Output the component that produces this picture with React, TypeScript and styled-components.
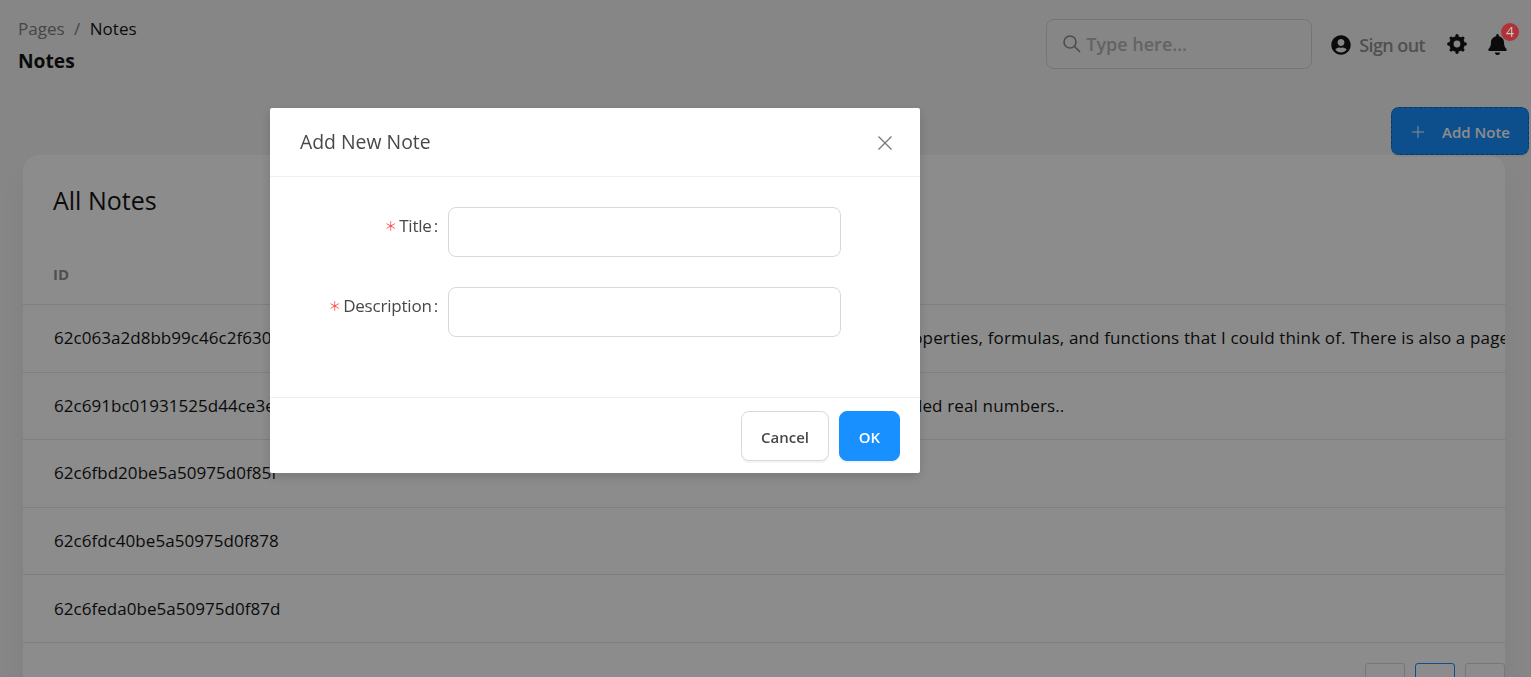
import React from "react";
import styled, { createGlobalStyle } from "styled-components";
import { FaUserCircle, FaBell } from "react-icons/fa";

const Global = createGlobalStyle`
    html, body {
        margin: 0;
        height: 100%;
        overflow: hidden;
        background: #f4f4f4;
        font-family: "Open Sans", "Liberation Sans", sans-serif;
    }
    * { box-sizing: border-box; }
`;

const Page = styled.div`
    height: 677px;
    overflow: hidden;
    padding: 0 2px 0 23px;
`;

const Header = styled.header`
    height: 107px;
    display: flex;
    justify-content: space-between;
    margin-left: -5px;
`;

const Crumbs = styled.div`
    padding-top: 17px;
`;

const CrumbLine = styled.div`
    display: flex;
    gap: 9.5px;
    font-size: 17px;
    line-height: 23px;
    color: #141414;
`;

const CrumbMuted = styled.span`
    color: #808080;
`;

const PageTitle = styled.div`
    margin-top: 9px;
    font-size: 19.2px;
    line-height: 24px;
    font-weight: 700;
    color: #141414;
`;

const Tools = styled.div`
    display: flex;
    align-items: center;
    height: 50px;
    margin-top: 19px;
    padding-right: 21px;
`;

const Search = styled.div`
    width: 266px;
    height: 50px;
    display: flex;
    align-items: center;
    gap: 4px;
    padding-left: 15px;
    border: 1px solid #d4d4d4;
    border-radius: 8px;
    font-size: 18px;
    font-weight: 600;
    color: #b5b5b5;
    margin-right: 19px;
`;

const SignOut = styled.div`
    display: flex;
    align-items: center;
    gap: 8px;
    margin-right: 22px;
    margin-top: 2px;
    font-size: 18px;
    letter-spacing: -0.6px;
    font-weight: 600;
    color: #929292;
`;

const BellWrap = styled.div`
    position: relative;
    display: flex;
    margin-left: 20px;
`;

const Badge = styled.span`
    position: absolute;
    z-index: 2;
    top: -11px;
    left: 14px;
    width: 18px;
    height: 18px;
    border-radius: 50%;
    background: #b03236;
    color: #c8c8c8;
    font-size: 14px;
    line-height: 18px;
    text-align: center;
`;

const ActionRow = styled.div`
    height: 48px;
    display: flex;
    justify-content: flex-end;
`;

const AddButton = styled.div`
    width: 138px;
    height: 48px;
    display: flex;
    align-items: center;
    gap: 18px;
    padding-left: 20px;
    padding-top: 1px;
    background: #1890ff;
    border: 1px dashed #0a65c2;
    border-radius: 8px;
    color: #fff;
    font-size: 15px;
    font-weight: 600;
    box-shadow: 0 2px 0 rgba(0, 0, 0, 0.045);
`;

const Card = styled.section`
    width: 1482px;
    height: 600px;
    background: #fff;
    border-radius: 16px;
    box-shadow: 0 20px 27px rgba(0, 0, 0, 0.05);
`;

const CardTitle = styled.h2`
    margin: 0;
    height: 92px;
    padding: 29px 0 0 30px;
    font-size: 25px;
    line-height: 33px;
    font-weight: 400;
    color: #141414;
`;

const Row = styled.div<{ $head?: boolean }>`
    height: ${p => (p.$head ? "58px" : "67.6px")};
    display: flex;
    align-items: center;
    border-bottom: 1px solid #e8e8e8;
    white-space: nowrap;
    overflow: hidden;
    padding-left: ${p => (p.$head ? "30px" : "31px")};
    padding-bottom: ${p => (p.$head ? "3px" : "1px")};
    font-size: ${p => (p.$head ? "15px" : "17px")};
    font-weight: ${p => (p.$head ? 700 : 400)};
    color: ${p => (p.$head ? "#909090" : "#141414")};
`;

const IdCell = styled.span`
    width: 595px;
    flex: none;
    letter-spacing: 0.04px;
`;

const DescCell = styled.span`
    letter-spacing: 0.15px;
`;

const Pager = styled.div`
    display: flex;
    justify-content: flex-end;
    gap: 10px;
    margin-top: 20px;
`;

const PageBox = styled.div<{ $active?: boolean }>`
    width: 40px;
    height: 40px;
    border: 1px solid ${p => (p.$active ? "#1890ff" : "#d9d9d9")};
    border-radius: 3px;
`;

const Overlay = styled.div`
    position: fixed;
    inset: 0;
    background: rgba(0, 0, 0, 0.45);
    padding: 108px 0 0 270px;
`;

const Modal = styled.div`
    width: 650px;
    height: 365px;
    background: #fff;
    border-radius: 2px;
    box-shadow: 0 4px 12px rgba(0, 0, 0, 0.15);
    display: flex;
    flex-direction: column;
`;

const ModalHead = styled.div`
    height: 69px;
    display: flex;
    align-items: center;
    justify-content: space-between;
    padding: 0 27px 2px 30px;
    border-bottom: 1px solid #f0f0f0;
    font-size: 19.4px;
    color: #484848;
`;

const CloseIcon = styled.svg`
    margin-top: 4px;
`;

const ModalBody = styled.div`
    flex: 1;
    display: flex;
    flex-direction: column;
    gap: 30px;
    padding-top: 30px;
`;

const Field = styled.div`
    display: flex;
    align-items: center;
    height: 50px;
`;

const Label = styled.label`
    width: 168px;
    margin: 0 10px 14px 0;
    display: flex;
    align-items: center;
    justify-content: flex-end;
    font-size: 17px;
    letter-spacing: -0.2px;
    color: #484848;
`;

const Star = styled.span`
    font-family: "Noto Sans CJK SC", monospace;
    font-size: 13px;
    line-height: 1;
    color: #ff4d4f;
    margin-right: 2px;
`;

const Colon = styled.span`
    margin-left: 2px;
`;

const Input = styled.input`
    width: 393px;
    height: 50px;
    border: 1px solid #d9d9d9;
    border-radius: 8px;
    outline: none;
`;

const ModalFoot = styled.div`
    height: 76px;
    display: flex;
    justify-content: flex-end;
    gap: 10px;
    padding: 13px 20px 0 0;
    border-top: 1px solid #f0f0f0;
`;

const FootButton = styled.button<{ $primary?: boolean }>`
    width: ${p => (p.$primary ? "61px" : "88px")};
    height: 50px;
    padding-top: 2px;
    border: 1px solid ${p => (p.$primary ? "#1890ff" : "#d9d9d9")};
    border-radius: 8px;
    background: ${p => (p.$primary ? "#1890ff" : "#fff")};
    color: ${p => (p.$primary ? "#fff" : "#484848")};
    font-family: inherit;
    font-size: 15px;
    font-weight: 600;
    box-shadow: 0 2px 0 rgba(0, 0, 0, 0.045);
`;

const Gear = () => (
    <svg width="20" height="20" viewBox="0 0 20 20" fill="none" stroke="#141414">
        <circle cx="10" cy="10" r="5.6" strokeWidth="4.4" />
        <path
            strokeWidth="3.4"
            strokeLinecap="round"
            d="M10 2 V1.8 M10 18 V18.2 M2 10 H1.8 M18 10 H18.2 M4.3 4.3 L4.2 4.2 M15.7 4.3 L15.8 4.2 M4.3 15.7 L4.2 15.8 M15.7 15.7 L15.8 15.8"
        />
    </svg>
);

const rows = [
    ["62c063a2d8bb99c46c2f630", "I tried to include all of the CSS properties, formulas, and functions that I could think of. There is also a page"],
    ["62c691bc01931525d44ce3e", "Short note on the set of all, so called real numbers.."],
    ["62c6fbd20be5a50975d0f85f", ""],
    ["62c6fdc40be5a50975d0f878", ""],
    ["62c6feda0be5a50975d0f87d", ""],
];

export default function App() {
    return (
        <>
            <Global />
            <Page>
                <Header>
                    <Crumbs>
                        <CrumbLine>
                            <CrumbMuted>Pages</CrumbMuted>
                            <CrumbMuted>/</CrumbMuted>
                            <span>Notes</span>
                        </CrumbLine>
                        <PageTitle>Notes</PageTitle>
                    </Crumbs>
                    <Tools>
                        <Search>
                            <svg width="20" height="20" viewBox="0 0 20 20" fill="none" stroke="#8c8c8c" strokeWidth="1.6">
                                <circle cx="8" cy="8" r="6" />
                                <path d="M12.5 12.5 L18 18" />
                            </svg>
                            Type here...
                        </Search>
                        <SignOut>
                            <FaUserCircle size={20} color="#141414" />
                            Sign out
                        </SignOut>
                        <Gear />
                        <BellWrap>
                            <FaBell size={21} color="#141414" />
                            <Badge>4</Badge>
                        </BellWrap>
                    </Tools>
                </Header>
                <ActionRow>
                    <AddButton>
                        <svg width="12" height="12" viewBox="0 0 12 12" stroke="#fff" strokeWidth="1">
                            <path d="M6 0 V12 M0 6 H12" />
                        </svg>
                        Add Note
                    </AddButton>
                </ActionRow>
                <Card>
                    <CardTitle>All Notes</CardTitle>
                    <Row $head>ID</Row>
                    {rows.map(r => (
                        <Row key={r[0]}>
                            <IdCell>{r[0]}</IdCell>
                            <DescCell>{r[1]}</DescCell>
                        </Row>
                    ))}
                    <Pager>
                        <PageBox />
                        <PageBox $active />
                        <PageBox />
                    </Pager>
                </Card>
            </Page>
            <Overlay>
                <Modal>
                    <ModalHead>
                        Add New Note
                        <CloseIcon width="16" height="16" viewBox="0 0 16 16" stroke="#777" strokeWidth="1.3">
                            <path d="M1.5 1.5 L14.5 14.5 M14.5 1.5 L1.5 14.5" />
                        </CloseIcon>
                    </ModalHead>
                    <ModalBody>
                        <Field>
                            <Label><Star>＊</Star>Title<Colon>:</Colon></Label>
                            <Input />
                        </Field>
                        <Field>
                            <Label><Star>＊</Star>Description<Colon>:</Colon></Label>
                            <Input />
                        </Field>
                    </ModalBody>
                    <ModalFoot>
                        <FootButton>Cancel</FootButton>
                        <FootButton $primary>OK</FootButton>
                    </ModalFoot>
                </Modal>
            </Overlay>
        </>
    );
}
